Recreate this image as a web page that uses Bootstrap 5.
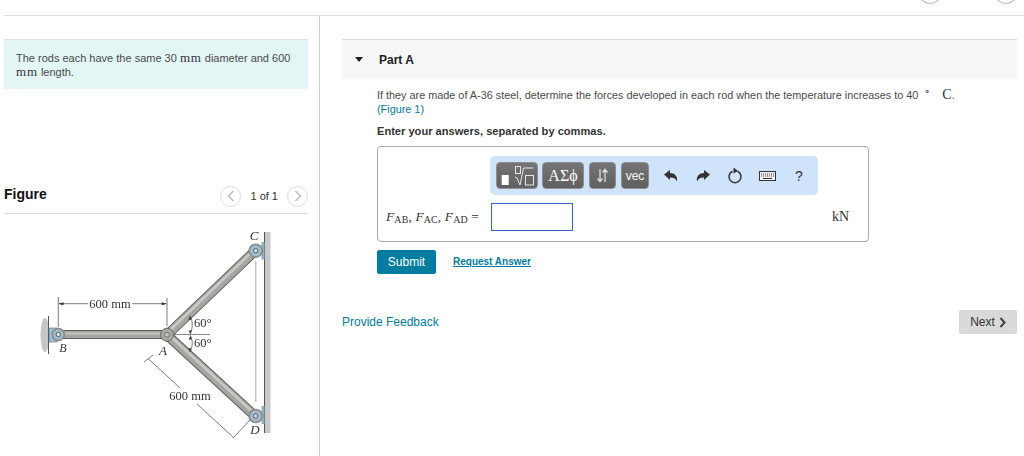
<!DOCTYPE html>
<html lang="en">
<head>
  <meta charset="UTF-8"/>
  <meta name="viewport" content="width=device-width, initial-scale=1.0"/>
  <title>Part A</title>
  <link href="https://cdn.jsdelivr.net/npm/bootstrap@5.3.3/dist/css/bootstrap.min.css" rel="stylesheet"/>
  <style>
    body { font-family: "Liberation Sans", Arial, sans-serif; font-size: 12px; line-height: 14px; color: #4a4a4a; background: #fff; overflow: hidden; }
    a { color: #007c9e; text-decoration: none; }
    .serif-math { display: inline-block; font-family: "Liberation Serif", serif; font-size: 14px; line-height: 12px; color: #333; }
    .unit-mm { font-size: 13px; letter-spacing: .8px; }
    .top-strip { height: 16px; margin-left: 4px; padding-right: 7px; gap: 54px; border-bottom: 1px solid #e0e0e0; overflow: hidden; }
    .top-ring { width: 22px; height: 21px; margin-top: -17px; border: 1px solid #bbb; border-radius: 50%; }
    .left-pane { width: 320px; height: 440px; padding-left: 4px; padding-right: 11px; border-right: 1px solid #c5cfe0; }
    .note-box { height: 50px; margin-top: 23px; padding: 11px 10px 11px 12px; font-size: 11px; background: #e4f5f6; border-top: 1px solid #d8e4e6; }
    .figure-head { height: 30px; margin-top: 95px; border-bottom: 1px solid #dcdcdc; }
    .figure-title { margin-bottom: 9px; font-size: 14px; font-weight: 700; color: #111; }
    .figure-pager { margin-bottom: 5px; }
    .pager-ring { width: 21px; height: 21px; border: 1px solid #ddd; border-radius: 50%; }
    .pager-text { margin: 0 9px; font-size: 11px; color: #333; }
    .figure-art { display: block; filter: blur(.35px); }
    .figure-art text { font-family: "Liberation Serif", serif; fill: #333; }
    .right-pane { padding-left: 22px; padding-right: 7px; }
    .part-bar { height: 40px; margin-top: 23px; background: #f7f7f7; border-top: 1px solid #ddd; padding-left: 13px; }
    .part-caret { width: 0; height: 0; border-left: 4.5px solid transparent; border-right: 4.5px solid transparent; border-top: 5px solid #222; margin-right: 16px; }
    .part-title { color: #222; font-weight: 700; }
    .part-body { padding-left: 35px; padding-top: 9px; font-size: 10.85px; }
    .temp-degree { margin: 0 9px 0 3px; font-size: 10px; }
    .prompt-bold { margin-top: 8px; font-size: 11.1px; font-weight: 700; color: #333; }
    .answer-box { width: 492px; height: 96px; margin-top: 8px; padding: 9px 19px 0 8px; border: 1px solid #aaa; border-radius: 4px; }
    .math-bar { width: 328px; height: 39px; margin-left: 104px; padding: 6px 0 6px 6px; background: #cfe3fb; border-radius: 5px; }
    .tool-btn { flex-shrink: 0; height: 27px; margin-right: 4px; padding: 0; color: #fff; background: linear-gradient(#757575, #606060); border: 1px solid #8e8e8e; border-radius: 4px; }
    .tool-roots { width: 42px; }
    .tool-greek { width: 42px; margin-right: 5px; font-family: "Liberation Serif", serif; font-size: 16px; }
    .tool-arrows { width: 27px; margin-right: 5px; }
    .tool-vec { width: 28px; margin-right: 6px; font-size: 12px; line-height: 22px; }
    .tool-plain { flex-shrink: 0; width: 32px; height: 27px; color: #333; font-size: 14px; }
    .answer-row { margin-top: 8px; }
    .answer-label { width: 105px; font-size: 13.5px; letter-spacing: .1px; }
    .answer-label sub { bottom: -.2em; font-size: 10px; font-style: normal; }
    .answer-field { width: 82px; height: 28px; border: 1px solid #2f62c4; border-radius: 0; }
    .answer-field:focus { border-color: #2f62c4; box-shadow: none; }
    .submit-btn { width: 59px; height: 24px; padding: 0; font-size: 12px; line-height: 22px; color: #fff; background: #007c9e; border-color: #007c9e; border-radius: 2px; }
    .request-link { margin-left: 17px; font-size: 10px; font-weight: 700; text-decoration: underline; }
    .next-row { margin-top: 36px; }
    .next-btn { width: 58px; height: 24px; padding: 0; font-size: 12px; color: #333; background: #d9d9d9; border: 0; border-radius: 2px; }
  </style>
</head>
<body class="m-0">
  <!-- top edge, the two nav rings are cut off by the window -->
  <div class="top-strip d-flex justify-content-end">
    <div class="top-ring"></div>
    <div class="top-ring"></div>
  </div>

  <div class="d-flex">
    <!-- Left side: statement and figure -->
    <div class="left-pane flex-shrink-0">
      <div class="note-box">The rods each have the same 30 <span class="serif-math unit-mm">mm</span> diameter and 600 <span class="serif-math unit-mm">mm</span> length.</div>

      <div class="figure-head d-flex align-items-center justify-content-between">
        <span class="figure-title">Figure</span>
        <div class="figure-pager d-flex align-items-center">
          <span class="pager-ring d-flex align-items-center justify-content-center">
            <svg width="8" height="12" viewBox="0 0 8 12"><path d="M6.500 1 1.500 6l5 5" fill="none" stroke="#bbb" stroke-width="1.500"/></svg>
          </span>
          <span class="pager-text">1 of 1</span>
          <span class="pager-ring d-flex align-items-center justify-content-center">
            <svg width="8" height="12" viewBox="0 0 8 12"><path d="M1.500 1l5 5-5 5" fill="none" stroke="#bbb" stroke-width="1.500"/></svg>
          </span>
        </div>
      </div>

      <svg class="figure-art" width="304" height="242" viewBox="4 214 304 242">
        <!-- walls -->
        <rect x="264.500" y="232" width="6" height="201" fill="#c9c9c9"/>
        <line x1="264.500" y1="232" x2="264.500" y2="433" stroke="#555" stroke-width="1"/>
        <ellipse cx="45" cy="335" rx="4.500" ry="17" fill="#c6c6c6"/>
        <line x1="48.500" y1="316" x2="48.500" y2="354" stroke="#555" stroke-width="1"/>
        <!-- thin reference line between C and D -->
        <line x1="255.700" y1="261" x2="255.700" y2="402" stroke="#c4c4c4" stroke-width="1.500"/>
        <!-- rods -->
        <g>
          <line x1="58" y1="334.500" x2="167" y2="334.500" stroke="#5d5d5d" stroke-width="9"/>
          <line x1="58" y1="334.500" x2="167" y2="334.500" stroke="#a5a5a1" stroke-width="7"/>
          <line x1="58" y1="333.500" x2="167" y2="333.500" stroke="#c4c4bf" stroke-width="2"/>
          <line x1="167" y1="335" x2="255" y2="251" stroke="#5d5d5d" stroke-width="10"/>
          <line x1="167" y1="335" x2="255" y2="251" stroke="#a5a5a1" stroke-width="8"/>
          <line x1="166" y1="334" x2="254" y2="250" stroke="#cacac5" stroke-width="2.500"/>
          <line x1="167" y1="335" x2="255" y2="416" stroke="#5d5d5d" stroke-width="10"/>
          <line x1="167" y1="335" x2="255" y2="416" stroke="#a5a5a1" stroke-width="8"/>
          <line x1="168" y1="334" x2="256" y2="415" stroke="#cacac5" stroke-width="2.500"/>
        </g>
        <!-- pin B -->
        <rect x="49" y="328" width="8" height="14" fill="#9dbdd0" stroke="#5c7282" stroke-width=".6"/>
        <circle cx="58.300" cy="334.500" r="6" fill="#9dbdd0" stroke="#8a8a80" stroke-width="1.600"/>
        <circle cx="58.300" cy="334.500" r="2.200" fill="#ddd" stroke="#444" stroke-width=".8"/>
        <!-- pin C -->
        <rect x="261.500" y="242" width="3" height="17.500" fill="#8fb0c4"/>
        <circle cx="255.700" cy="250.700" r="6.500" fill="#9dbdd0" stroke="#8a8a80" stroke-width="1.600"/>
        <circle cx="255.700" cy="250.700" r="2.200" fill="#ddd" stroke="#444" stroke-width=".8"/>
        <!-- pin D -->
        <rect x="261.500" y="406" width="3" height="18" fill="#8fb0c4"/>
        <circle cx="255.700" cy="416" r="6.500" fill="#9dbdd0" stroke="#8a8a80" stroke-width="1.600"/>
        <circle cx="255.700" cy="416" r="2.200" fill="#ddd" stroke="#444" stroke-width=".8"/>
        <!-- pin A -->
        <line x1="167" y1="334.500" x2="210" y2="334.500" stroke="#555" stroke-width=".7"/>
        <circle cx="167" cy="334.700" r="6.500" fill="#a9a9a3" stroke="#66665f" stroke-width="1"/>
        <circle cx="167" cy="334.700" r="2.400" fill="#c8c8c3" stroke="#555" stroke-width=".7"/>
        <!-- dimensions -->
        <g stroke="#444" stroke-width=".7" fill="none">
          <line x1="58.300" y1="297" x2="58.300" y2="327"/>
          <line x1="167" y1="298" x2="167" y2="326"/>
          <line x1="59" y1="303.700" x2="88" y2="303.700"/>
          <line x1="132" y1="303.700" x2="166" y2="303.700"/>
          <path d="M190 316c3 5 3 12 0 18M190 335c3 5 3 11 0 17"/>
          <line x1="148" y1="358.500" x2="180" y2="388"/>
          <line x1="197" y1="404" x2="234" y2="438"/>
          <line x1="144" y1="362" x2="153" y2="355"/>
          <line x1="233" y1="438" x2="250" y2="420"/>
        </g>
        <path d="M58.500 303.700l5-1.500v3zM166.700 303.700l-5-1.500v3zM190 316l-1.600 4 3-.4zM190.500 334l-2-3.600 3.400.2zM190.500 336l-2 3.600 3.400-.2zM190 352l-1.600-4 3 .4z" fill="#333"/>
        <text x="110" y="307.500" font-size="12.500" text-anchor="middle">600 mm</text>
        <text x="190" y="400" font-size="12.500" text-anchor="middle">600 mm</text>
        <text x="194" y="326.500" font-size="12.500">60°</text>
        <text x="194" y="346.500" font-size="12.500">60°</text>
        <text x="254" y="240" font-size="13" font-style="italic" text-anchor="middle">C</text>
        <text x="255" y="434" font-size="13" font-style="italic" text-anchor="middle">D</text>
        <text x="63" y="352" font-size="12" font-style="italic" text-anchor="middle">B</text>
        <text x="163" y="355" font-size="13" font-style="italic" text-anchor="middle">A</text>
      </svg>
    </div>

    <!-- Right side: Part A -->
    <div class="right-pane flex-grow-1">
      <div class="part-bar d-flex align-items-center">
        <span class="part-caret"></span>
        <span class="part-title">Part A</span>
      </div>
      <div class="part-body">
        <div>If they are made of A-36 steel, determine the forces developed in each rod when the temperature increases to 40 <sup class="temp-degree">∘</sup> <span class="serif-math">C</span>.<br/><a href="#">(Figure 1)</a></div>
        <div class="prompt-bold">Enter your answers, separated by commas.</div>

        <div class="answer-box">
          <div class="math-bar d-flex align-items-center">
            <button type="button" class="btn tool-btn tool-roots d-flex align-items-center justify-content-center">
              <svg width="40" height="25" viewBox="1 1 40 25" fill="none" stroke="#e8e8e8">
                <rect x="5.700" y="13" width="7" height="10" fill="#fff" stroke="none"/>
                <rect x="19.500" y="4.500" width="5" height="7"/>
                <path d="M19 15l2 1 3 7 3.500-17h10"/>
                <rect x="29.500" y="13.500" width="8" height="9.500"/>
              </svg>
            </button>
            <button type="button" class="btn tool-btn tool-greek">ΑΣϕ</button>
            <button type="button" class="btn tool-btn tool-arrows d-flex align-items-center justify-content-center">
              <svg width="13" height="15" viewBox="0 0 13 15" fill="none" stroke="#e8e8e8" stroke-width="1.200">
                <path d="M4 1v12M1.500 10.500 4 13.500l2.500-3M9 14V2M6.500 4.500 9 1.500l2.500 3"/>
              </svg>
            </button>
            <button type="button" class="btn tool-btn tool-vec">vec</button>
            <span class="tool-plain d-flex align-items-center justify-content-center">
              <svg width="14" height="12" viewBox="0 0 14 12"><path d="M0 4.500 6 0v3c4.500 0 8 3 7 8.500-1-2.800-3-4-7-4V10z" fill="#333"/></svg>
            </span>
            <span class="tool-plain d-flex align-items-center justify-content-center">
              <svg width="14" height="12" viewBox="0 0 14 12"><path d="M14 4.500 8 0v3C3.500 3 0 6 1 11.500c1-2.800 3-4 7-4V10z" fill="#333"/></svg>
            </span>
            <span class="tool-plain d-flex align-items-center justify-content-center">
              <svg width="16" height="18" viewBox="0 0 16 18" fill="none">
                <path d="M10.500 4.200A6 6 0 1 1 5.500 4.200" stroke="#333" stroke-width="1.500"/>
                <path d="M6.500 0.500 11 4 6.500 6.500z" fill="#333"/>
              </svg>
            </span>
            <span class="tool-plain d-flex align-items-center justify-content-center">
              <svg width="17" height="10" viewBox="0 0 17 10">
                <rect x=".5" y=".5" width="16" height="9" fill="#f4f4f4" stroke="#333"/>
                <path d="M2 3h13M2 5h13" stroke="#333" stroke-dasharray="1 1"/>
                <path d="M4 7.500h9" stroke="#333"/>
              </svg>
            </span>
            <span class="tool-plain d-flex align-items-center justify-content-center">?</span>
          </div>

          <div class="answer-row d-flex align-items-center">
            <span class="answer-label serif-math"><i>F</i><sub>AB</sub>, <i>F</i><sub>AC</sub>, <i>F</i><sub>AD</sub> =</span>
            <input type="text" class="form-control answer-field" aria-label="Answer"/>
            <span class="serif-math ms-auto">kN</span>
          </div>
        </div>

        <div class="d-flex align-items-center mt-2">
          <button type="button" class="btn submit-btn">Submit</button>
          <a href="#" class="request-link">Request Answer</a>
        </div>
      </div>

      <div class="next-row d-flex align-items-center justify-content-between">
        <a href="#">Provide Feedback</a>
        <button type="button" class="btn next-btn d-flex align-items-center justify-content-center gap-1">Next
          <svg width="7" height="11" viewBox="0 0 7 11"><path d="M1.500 1l4 4.500-4 4.500" fill="none" stroke="#444" stroke-width="2"/></svg>
        </button>
      </div>
    </div>
  </div>

  <script src="https://cdn.jsdelivr.net/npm/bootstrap@5.3.3/dist/js/bootstrap.bundle.min.js"></script>
</body>
</html>
